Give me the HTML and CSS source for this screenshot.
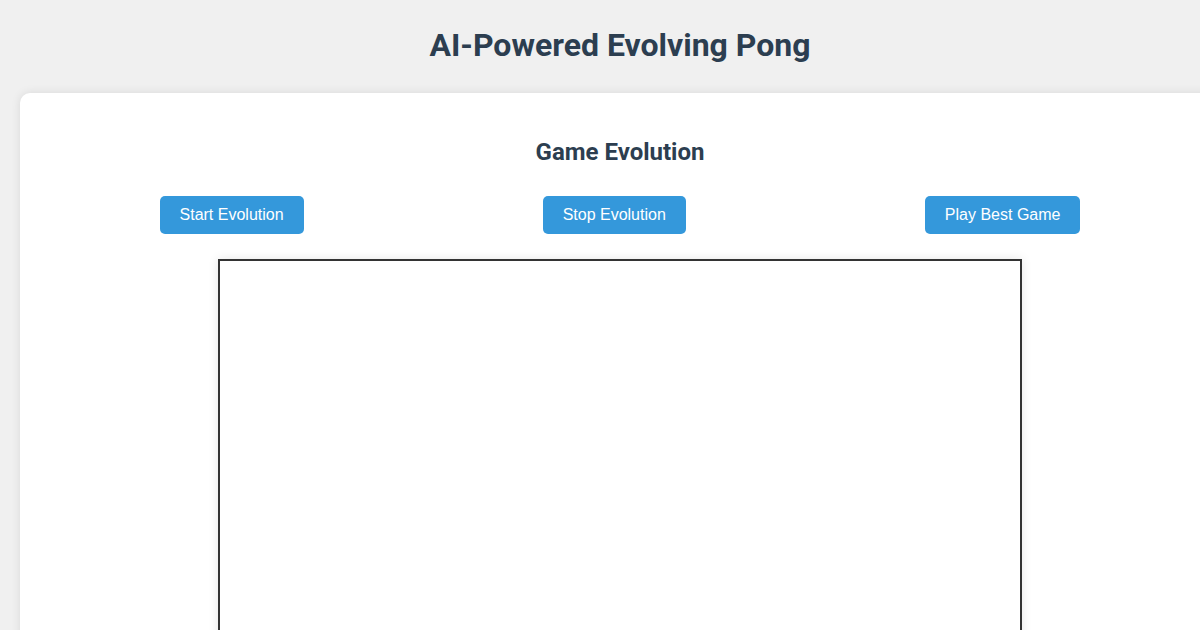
FILE: index.html
```html
<!DOCTYPE html>
<html lang="en">
<head>
<meta charset="utf-8">
<title>AI-Powered Evolving Pong</title>
<link rel="stylesheet" href="styles.css">
</head>
<body>
<div class="page">
  <h1 class="title">AI-Powered Evolving Pong</h1>
  <section class="card">
    <h2 class="section-title">Game Evolution</h2>
    <div class="controls">
      <button class="btn">Start Evolution</button>
      <button class="btn">Stop Evolution</button>
      <button class="btn">Play Best Game</button>
    </div>
    <div class="canvas-wrap">
      <div class="game-canvas"></div>
    </div>
  </section>
</div>
</body>
</html>
```
FILE: styles.css
```css
html, body {
  margin: 0;
  padding: 0;
  overflow: hidden;
  background: #f0f0f0;
}

body {
  font-family: Roboto, "Liberation Sans", Arial, sans-serif;
  color: #2c3e50;
}

.page {
  width: 1200px;
  padding: 26px 20px 20px;
}

.title {
  margin: 0;
  font-size: 32px;
  line-height: 38px;
  font-weight: 700;
  text-align: center;
  color: #2c3e50;
}

.card {
  margin-top: 29px;
  background: #ffffff;
  border-radius: 10px;
  box-shadow: 0 0 10px rgba(0, 0, 0, 0.1);
  padding: 20px;
}

.section-title {
  margin: 25px 0 0;
  font-size: 24px;
  line-height: 28px;
  font-weight: 700;
  text-align: center;
  color: #2c3e50;
}

.controls {
  display: flex;
  justify-content: space-around;
  margin-top: 30px;
}

.btn {
  font-family: "Liberation Sans", Arial, sans-serif;
  font-size: 16px;
  line-height: 18px;
  padding: 10px 20px;
  background: #3498db;
  color: #ffffff;
  border: none;
  border-radius: 5px;
  cursor: pointer;
}

.canvas-wrap {
  display: flex;
  justify-content: center;
  margin-top: 25px;
}

.game-canvas {
  width: 800px;
  height: 600px;
  border: 2px solid #333333;
  background: #ffffff;
  box-shadow: 0 0 10px rgba(0, 0, 0, 0.1);
}
```
